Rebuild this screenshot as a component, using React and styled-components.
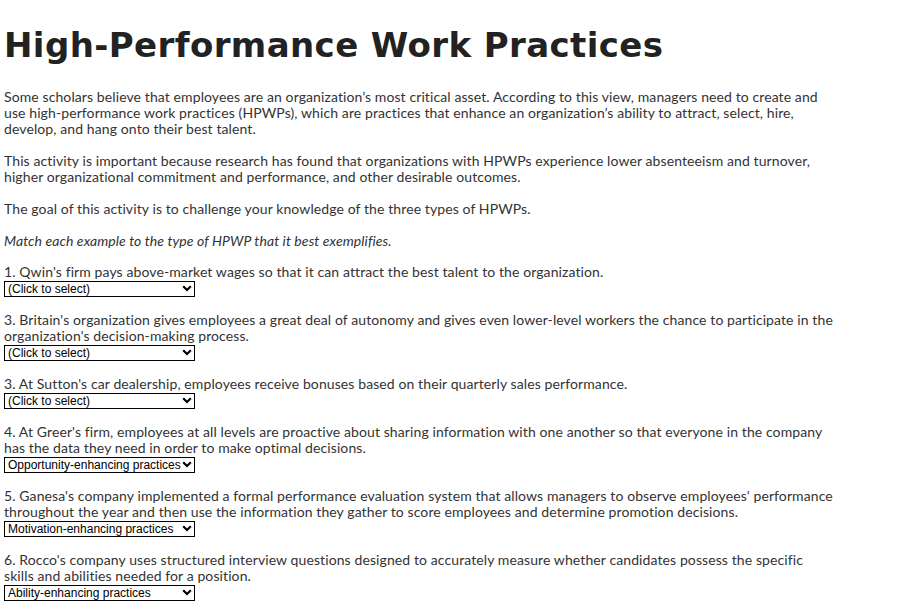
import React from 'react';
import styled, { createGlobalStyle } from 'styled-components';

const GlobalStyle = createGlobalStyle`
    html, body {
        margin: 0;
        padding: 0;
        background: #fff;
    }
`;

const Page = styled.div`
    padding: 0 4px;
    max-width: 830px;
    font-family: Lato, "Open Sans", sans-serif;
    font-size: 14px;
    line-height: 16px;
    letter-spacing: 0.1px;
    color: #333;
`;

const Title = styled.h1`
    margin: 25px 0 24px;
    font-family: "DejaVu Sans", Inter, sans-serif;
    font-size: 34px;
    line-height: 40px;
    font-weight: 700;
    color: #222;
    letter-spacing: 0.4px;
`;

const Para = styled.p`
    margin: 0 0 ${props => (props.italic ? '15px' : '16px')};
    font-style: ${props => (props.italic ? 'italic' : 'normal')};
`;

const Question = styled.div`
    margin-bottom: 16px;
`;

const Prompt = styled.div`
    margin: 0;
`;

const SelectWrap = styled.div`
    position: relative;
    width: 191px;
    height: 16px;
`;

const Select = styled.select`
    appearance: none;
    -webkit-appearance: none;
    box-sizing: border-box;
    width: 100%;
    height: 100%;
    margin: 0;
    padding: 0 0 0 3px;
    border: 1px solid #000;
    border-radius: 0;
    background: #fff;
    font-family: "Liberation Sans", Arial, sans-serif;
    font-size: 12px;
    line-height: 14px;
    letter-spacing: 0;
    color: #000;
    outline: none;
`;

const Chevron = styled.svg`
    position: absolute;
    right: 3px;
    top: 5px;
    width: 10px;
    height: 7px;
    pointer-events: none;
`;

const OPTIONS = [
    '(Click to select)',
    'Ability-enhancing practices',
    'Motivation-enhancing practices',
    'Opportunity-enhancing practices',
];

const QUESTIONS = [
    { text: "1. Qwin's firm pays above-market wages so that it can attract the best talent to the organization.", value: '(Click to select)' },
    { text: "3. Britain's organization gives employees a great deal of autonomy and gives even lower-level workers the chance to participate in the organization's decision-making process.", value: '(Click to select)' },
    { text: "3. At Sutton's car dealership, employees receive bonuses based on their quarterly sales performance.", value: '(Click to select)' },
    { text: "4. At Greer's firm, employees at all levels are proactive about sharing information with one another so that everyone in the company has the data they need in order to make optimal decisions.", value: 'Opportunity-enhancing practices' },
    { text: "5. Ganesa's company implemented a formal performance evaluation system that allows managers to observe employees' performance throughout the year and then use the information they gather to score employees and determine promotion decisions.", value: 'Motivation-enhancing practices' },
    { text: "6. Rocco's company uses structured interview questions designed to accurately measure whether candidates possess the specific skills and abilities needed for a position.", value: 'Ability-enhancing practices' },
];

const Dropdown = ({ initialValue }) => {
    const [value, setValue] = React.useState(initialValue);
    return (
        <SelectWrap>
            <Select value={value} onChange={e => setValue(e.target.value)}>
                {OPTIONS.map(o => (
                    <option key={o} value={o}>{o}</option>
                ))}
            </Select>
            <Chevron viewBox="0 0 10 7">
                <path d="M1.2 1.2 L5 5 L8.8 1.2" fill="none" stroke="#000" strokeWidth="2.2" />
            </Chevron>
        </SelectWrap>
    );
};

const App = () => (
    <Page>
        <GlobalStyle />
        <Title>High-Performance Work Practices</Title>
        <Para>
            Some scholars believe that employees are an organization’s most critical asset. According to this view, managers need to create and use high-performance work practices (HPWPs), which are practices that enhance an organization’s ability to attract, select, hire, develop, and hang onto their best talent.
        </Para>
        <Para>
            This activity is important because research has found that organizations with HPWPs experience lower absenteeism and turnover, higher organizational commitment and performance, and other desirable outcomes.
        </Para>
        <Para>The goal of this activity is to challenge your knowledge of the three types of HPWPs.</Para>
        <Para italic>Match each example to the type of HPWP that it best exemplifies.</Para>
        {QUESTIONS.map((q, i) => (
            <Question key={i}>
                <Prompt>{q.text}</Prompt>
                <Dropdown initialValue={q.value} />
            </Question>
        ))}
    </Page>
);

export default App;
